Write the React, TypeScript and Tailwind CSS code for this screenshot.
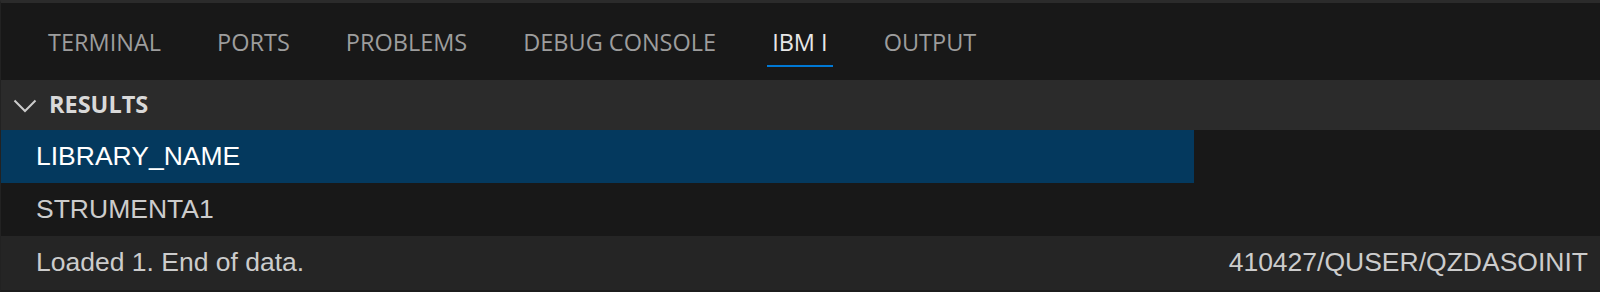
const tabs = ['TERMINAL', 'PORTS', 'PROBLEMS', 'DEBUG CONSOLE', 'IBM I', 'OUTPUT'];

export default function App() {
  return (
    <div className="w-[1600px] h-[292px] flex flex-col bg-[#181818] border-t-[3px] border-t-[#2b2b2b] border-b-2 border-b-[#1c1c1c] border-l border-l-[#222222] overflow-hidden">
      {/* Panel tabs */}
      <div className="h-[77px] shrink-0 flex items-start pl-[42px] gap-[46px]" style={{ fontFamily: '"Open Sans", "Noto Sans", sans-serif' }}>
        {tabs.map((t) => {
          const active = t === 'IBM I';
          return (
            <div key={t} className="flex flex-col items-center pt-[23px]">
              <span
                className={`px-[5px] text-[23.5px] leading-[32px] ${active ? 'text-[#e7e7e7]' : 'text-[#9d9d9d]'}`}
              >
                {t}
              </span>
              <div className={`mt-[7px] h-[2px] w-full ${active ? 'bg-[#0078d4]' : 'bg-transparent'}`} />
            </div>
          );
        })}
      </div>

      {/* Results section header */}
      <div className="h-[50px] shrink-0 bg-[#2b2b2b] flex items-center pl-[12px] gap-[12px]">
        <svg width="24" height="14" viewBox="0 0 24 14" className="text-[#cccccc] mt-[1px]">
          <polyline points="1.5,1.5 12,12 22.5,1.5" fill="none" stroke="currentColor" strokeWidth="2" />
        </svg>
        <span
          className="text-[23.5px] font-bold text-[#d9d9d9]"
          style={{ fontFamily: '"Open Sans", "Noto Sans", sans-serif' }}
        >
          RESULTS
        </span>
      </div>

      {/* Table rows */}
      <div className="flex flex-col" style={{ fontFamily: '"Liberation Sans", Arial, sans-serif' }}>
        <div className="h-[53px] w-[1193px] bg-[#04395e] flex items-center pl-[35px] text-[26.5px] text-white">
          LIBRARY_NAME
        </div>
        <div className="h-[53px] flex items-center pl-[35px] text-[26.5px] text-[#cccccc]">
          STRUMENTA1
        </div>
      </div>

      {/* Status line */}
      <div
        className="flex-1 bg-[#252525] flex items-center justify-between pl-[35px] pr-[12px] text-[26.5px] text-[#cccccc]"
        style={{ fontFamily: '"Liberation Sans", Arial, sans-serif' }}
      >
        <span>Loaded 1. End of data.</span>
        <span>410427/QUSER/QZDASOINIT</span>
      </div>
    </div>
  );
}
